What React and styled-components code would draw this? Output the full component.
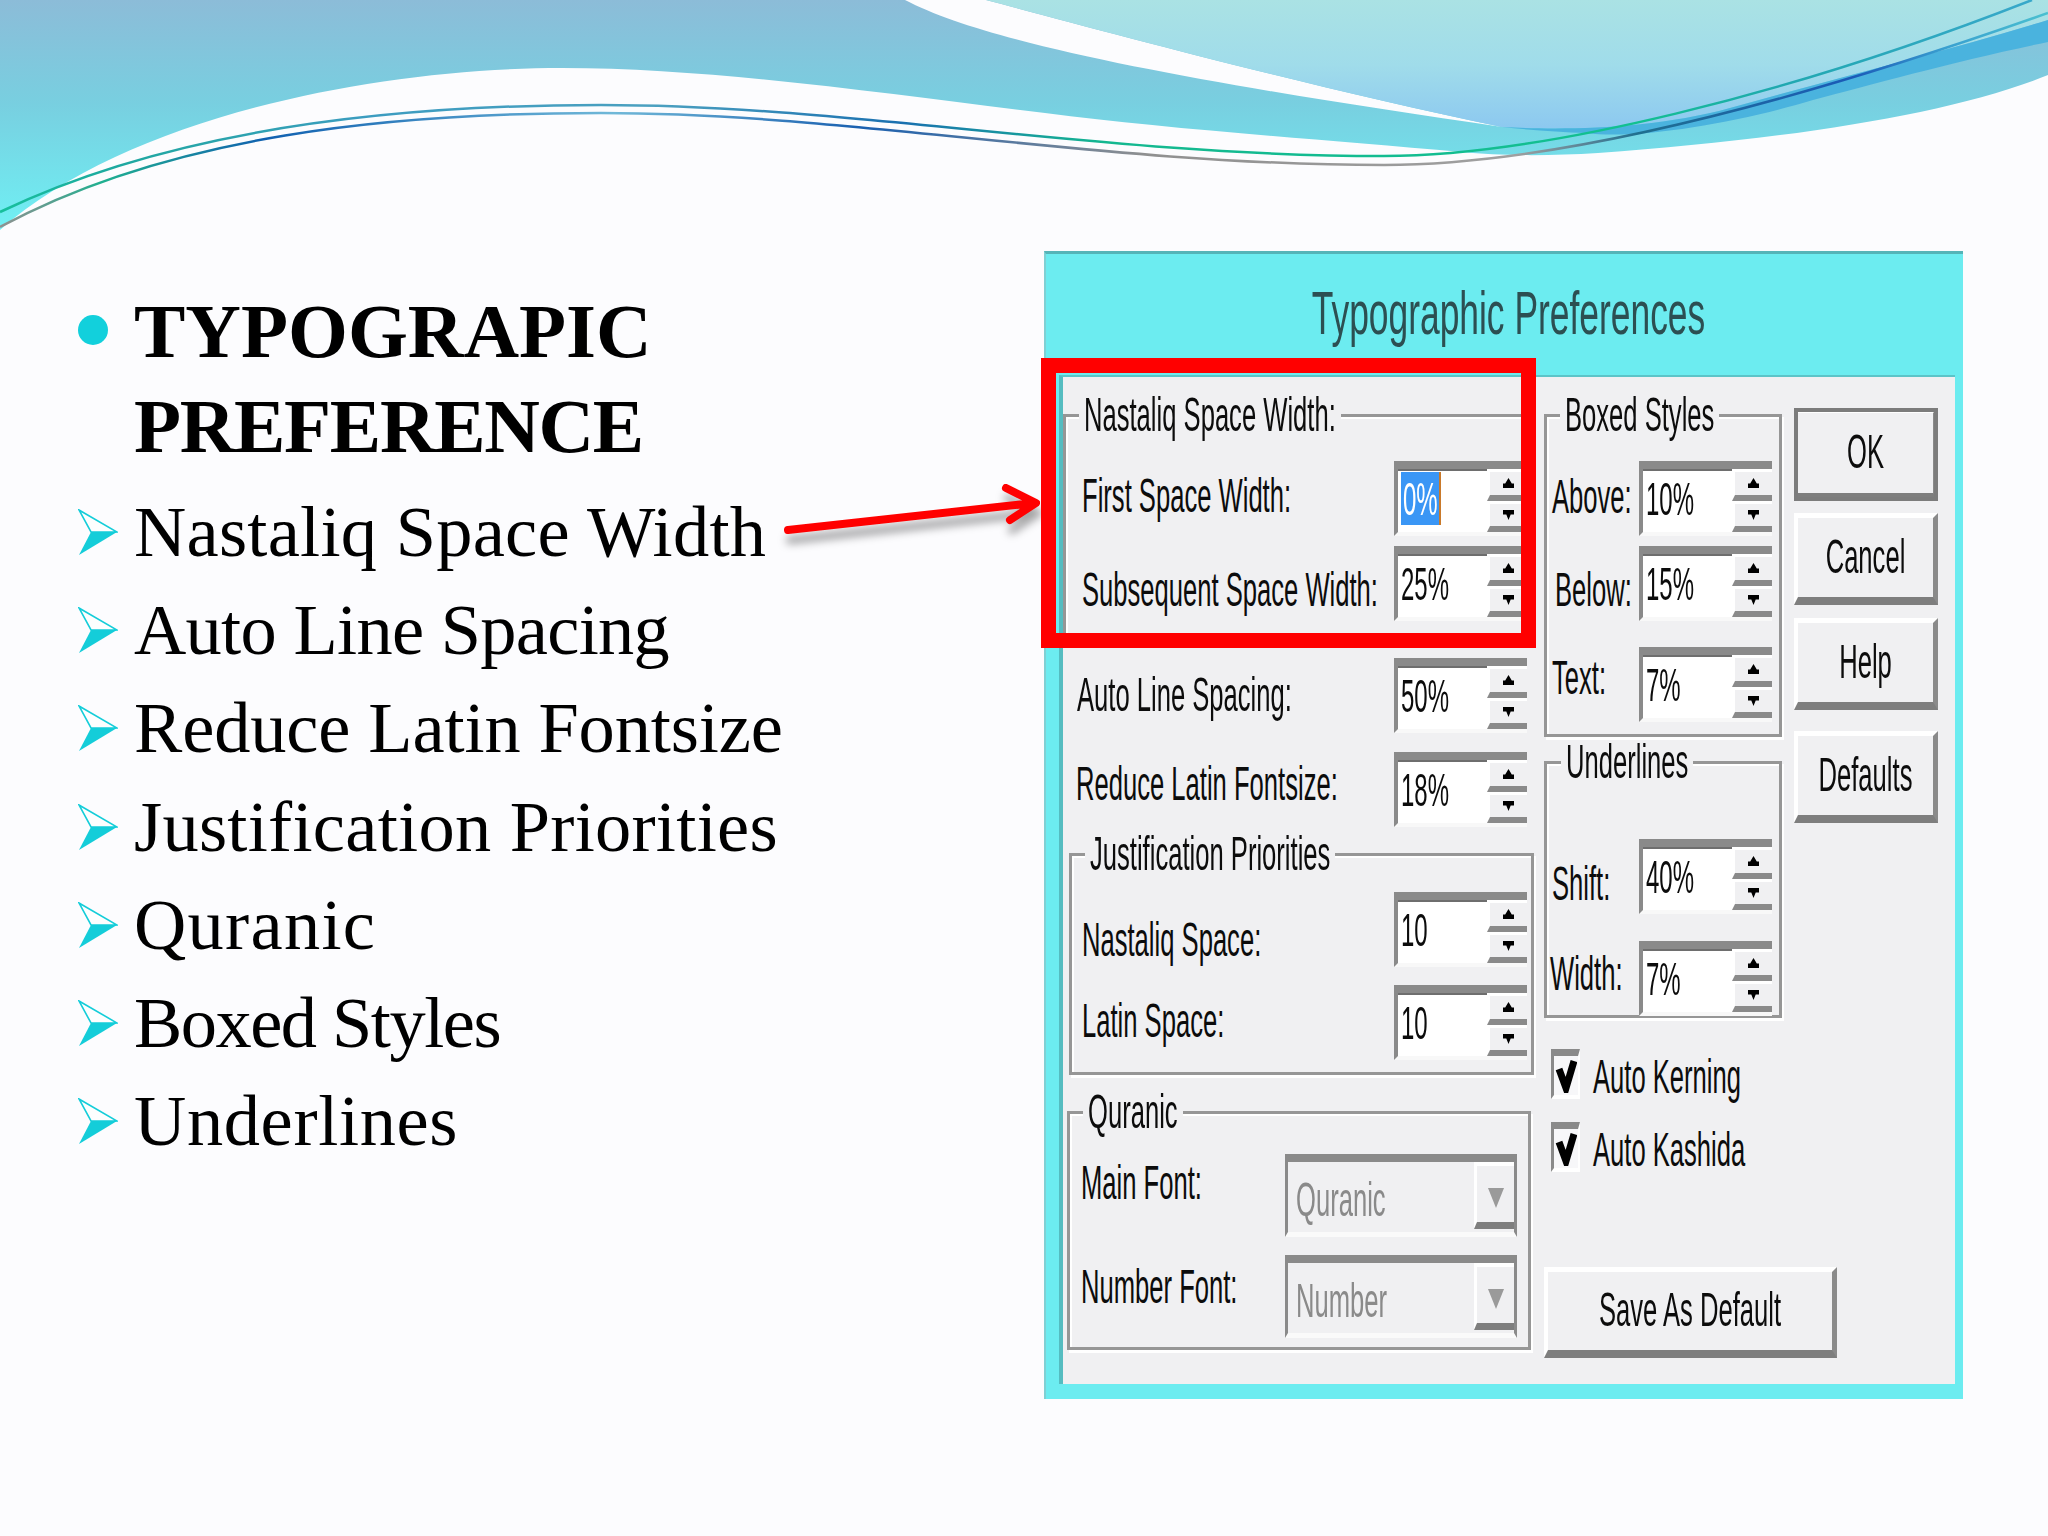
import styled, { createGlobalStyle } from "styled-components";

const GlobalStyle = createGlobalStyle`
  html, body {
    margin: 0;
    padding: 0;
    background: #fcfcfe;
  }
  #root {
    width: 2048px;
    height: 1536px;
    overflow: hidden;
  }
`;

const PANEL = "#f0f0f2";
const LINE = "#8a8a8a";

const Page = styled.div`
  width: 2048px;
  height: 1536px;
  background: #fcfcfe;
`;

const Waves = styled.svg`
  display: block;
  width: 2048px;
  height: 230px;
`;

const Main = styled.div`
  position: relative;
  display: flex;
  padding-left: 78px;
`;

const TextColumn = styled.div`
  width: 966px;
  flex-shrink: 0;
  padding-top: 54px;
  box-sizing: border-box;
  font-family: "Liberation Serif", serif;
  color: #000;
`;

const HeadRow = styled.div`
  display: flex;
  margin-bottom: 9px;
`;

const Dot = styled.span`
  width: 30px;
  height: 30px;
  margin: 31px 26px 0 0;
  border-radius: 50%;
  background: #12d0dc;
  flex-shrink: 0;
`;

const Head = styled.div`
  display: flex;
  flex-direction: column;
  font-size: 77px;
  line-height: 95px;
  font-weight: bold;
`;

const HeadLine = styled.span`
  letter-spacing: ${(p) => p.$spacing || 0}px;
  white-space: nowrap;
`;

const Item = styled.div`
  display: flex;
  height: 98.2px;
  font-size: 72.4px;
  line-height: 98px;
  white-space: nowrap;
  letter-spacing: ${(p) => p.$spacing}px;
`;

const Marker = styled.svg`
  width: 40px;
  height: 46px;
  margin: 26px 16px 0 0;
  flex-shrink: 0;
`;

const Pointer = styled.svg`
  position: absolute;
  left: 780px;
  top: 250px;
  width: 270px;
  height: 60px;
  filter: drop-shadow(2px 10px 4px rgba(0, 0, 0, 0.35));
`;

const Dialog = styled.div`
  position: relative;
  width: 919px;
  height: 1148px;
  margin-top: 21px;
  flex-shrink: 0;
  box-sizing: border-box;
  background: #6cecf0;
  border-top: 3px solid #55b4b8;
  border-left: 2px solid #7fd0d4;
  padding: 0 8px 15px 13px;
  display: flex;
  flex-direction: column;
`;

const TitleBar = styled.div`
  height: 121px;
  flex-shrink: 0;
  box-sizing: border-box;
  display: flex;
  align-items: center;
  justify-content: center;
  padding-left: 3px;
`;

const Title = styled.span`
  display: inline-block;
  font-family: "Liberation Sans", sans-serif;
  font-size: 35.4px;
  line-height: 1;
  color: #2c4f52;
  transform: scaleY(1.72);
`;

const Panel = styled.div`
  flex: 1;
  box-sizing: border-box;
  display: flex;
  background: ${PANEL};
  border-top: 2px solid #5cc4c8;
  border-left: 4px solid #55bcc0;
  padding-top: 37px;
`;

const LeftColumn = styled.div`
  width: 471px;
  margin-right: 10px;
  flex-shrink: 0;
  display: flex;
  flex-direction: column;
`;

const RightSide = styled.div`
  display: flex;
  flex-direction: column;
`;

const RightTop = styled.div`
  display: flex;
`;

const MiddleColumn = styled.div`
  width: 238px;
  margin-right: 12px;
  flex-shrink: 0;
  display: flex;
  flex-direction: column;
`;

const ButtonColumn = styled.div`
  width: 144px;
  margin-top: -6px;
  display: flex;
  flex-direction: column;
`;

const Group = styled.div`
  position: relative;
  box-sizing: border-box;
  height: ${(p) => p.$h}px;
  margin-top: ${(p) => p.$mt || 0}px;
  margin-left: ${(p) => p.$ml || 0}px;
  margin-right: ${(p) => p.$mr || 0}px;
  padding-top: ${(p) => p.$pt}px;
  border: 3px solid #969696;
  box-shadow: inset 2px 2px 0 #fff, 2px 3px 0 #fff;
`;

const Legend = styled.div`
  position: absolute;
  top: -18px;
  left: ${(p) => p.$left}px;
  height: 34px;
  padding: 0 5px;
  background: ${PANEL};
  display: flex;
  align-items: center;
`;

const Row = styled.div`
  display: flex;
  align-items: center;
  justify-content: space-between;
  margin-top: ${(p) => p.$mt || 0}px;
  padding-left: ${(p) => p.$indent || 0}px;
  padding-right: ${(p) => p.$right ?? 7}px;
`;

const Label = styled.span`
  display: inline-block;
  font-family: "Liberation Sans", sans-serif;
  font-size: 25.6px;
  line-height: 1;
  color: #0c0c0c;
  white-space: nowrap;
  transform: translateY(${(p) => p.$dy || 0}px) scaleY(1.9);
`;

const FieldBox = styled.div`
  width: 133px;
  height: 75px;
  flex-shrink: 0;
  box-sizing: border-box;
  display: flex;
  background: #fff;
  border-top: 8px solid ${LINE};
  border-left: 4px solid ${LINE};
  border-bottom: 4px solid #f8f8f8;
  box-shadow: inset 0 2px 0 #6e6e6e;
`;

const FieldValue = styled.div`
  flex: 1;
  display: flex;
  align-items: center;
  padding: 0 0 4px 3px;
`;

const Selected = styled.span`
  height: 53px;
  padding: 0 1px 0 2px;
  display: flex;
  align-items: center;
  background: #3a96f5;
  border-right: 2px solid #c9792a;
`;

const ValueText = styled.span`
  display: inline-block;
  font-family: "Liberation Sans", sans-serif;
  font-size: 24px;
  line-height: 1;
  color: ${(p) => (p.$light ? "#fff" : "#0c0c0c")};
  transform: scaleY(1.95);
`;

const Spinner = styled.div`
  width: 40px;
  flex-shrink: 0;
  display: flex;
  flex-direction: column;
`;

const SpinButton = styled.div`
  flex: 1;
  box-sizing: border-box;
  display: flex;
  align-items: center;
  justify-content: center;
  background: ${PANEL};
  border-top: 3px solid #fff;
  border-left: 3px solid #fff;
  border-bottom: 6px solid ${LINE};
`;

const SpinArrow = styled.svg`
  width: 11px;
  height: 10px;
`;

const CommandButton = styled.div`
  box-sizing: border-box;
  height: ${(p) => p.$h}px;
  width: ${(p) => p.$w || 144}px;
  margin-top: ${(p) => p.$mt || 0}px;
  flex-shrink: 0;
  display: flex;
  align-items: center;
  justify-content: center;
  background: ${PANEL};
  border-style: solid;
  border-width: 5px 5px 8px 4px;
  border-color: #fff ${LINE} #7e7e7e #fff;
  ${(p) => p.$primary && `outline: 4px solid #7c7c7c; outline-offset: -4px;`}
`;

const CheckRow = styled.div`
  display: flex;
  align-items: center;
  gap: 13px;
  margin-top: ${(p) => p.$mt}px;
  padding-left: 7px;
`;

const CheckBox = styled.div`
  width: 29px;
  height: 50px;
  box-sizing: border-box;
  flex-shrink: 0;
  background: #f7f7f9;
  border-top: 7px solid ${LINE};
  border-left: 3px solid ${LINE};
  border-bottom: 4px solid #fff;
  border-right: 2px solid #fff;
  display: flex;
  align-items: center;
  justify-content: center;
`;

const CheckMark = styled.svg`
  width: 22px;
  height: 35px;
`;

const ComboBox = styled.div`
  width: 232px;
  height: 83px;
  flex-shrink: 0;
  box-sizing: border-box;
  display: flex;
  background: ${PANEL};
  border-top: 8px solid ${LINE};
  border-left: 3px solid ${LINE};
  border-bottom: 5px solid #fafafa;
  border-right: 3px solid ${LINE};
`;

const ComboText = styled.div`
  flex: 1;
  display: flex;
  align-items: center;
  padding: 8px 0 0 8px;
`;

const ComboLabel = styled(Label)`
  color: #8a8a8a;
`;

const ComboArrow = styled.div`
  width: 40px;
  box-sizing: border-box;
  display: flex;
  align-items: center;
  justify-content: center;
  padding-top: 8px;
  background: ${PANEL};
  border-top: 4px solid #fff;
  border-left: 3px solid #fff;
  border-bottom: 7px solid #7e7e7e;
  margin-bottom: 3px;
`;

const ComboTriangle = styled.svg`
  width: 16px;
  height: 20px;
`;

const RedFrame = styled.div`
  position: absolute;
  left: -5px;
  top: 104px;
  width: 495px;
  height: 290px;
  box-sizing: border-box;
  border: 15px solid #ff0000;
`;

const items = [
  { text: "Nastaliq Space Width", spacing: 0.26 },
  { text: "Auto Line Spacing", spacing: -0.69 },
  { text: "Reduce Latin Fontsize", spacing: -0.12 },
  { text: "Justification Priorities", spacing: 0.27 },
  { text: "Quranic", spacing: 1.3 },
  { text: "Boxed Styles", spacing: -1.5 },
  { text: "Underlines", spacing: 0.65 },
];

function Arrowhead() {
  return (
    <Marker viewBox="0 0 40 46">
      <polygon
        points="1,1 39,23 13,23"
        fill="#fdfefe"
        stroke="#14cdd9"
        strokeWidth="1.6"
      />
      <polygon points="13,23 39,23 1,46" fill="#14cdd9" />
    </Marker>
  );
}

function SpinField({ value, selected }) {
  return (
    <FieldBox>
      <FieldValue>
        {selected ? (
          <Selected>
            <ValueText $light>{value}</ValueText>
          </Selected>
        ) : (
          <ValueText>{value}</ValueText>
        )}
      </FieldValue>
      <Spinner>
        <SpinButton>
          <SpinArrow viewBox="0 0 10 9">
            <path d="M5 0 L8 5 H10 V9 H0 V5 H2 Z" fill="#000" />
          </SpinArrow>
        </SpinButton>
        <SpinButton>
          <SpinArrow viewBox="0 0 10 9">
            <path d="M0 0 H10 V4 H7 L5 9 L3 4 H0 Z" fill="#000" />
          </SpinArrow>
        </SpinButton>
      </Spinner>
    </FieldBox>
  );
}

function Combo({ value }) {
  return (
    <ComboBox>
      <ComboText>
        <ComboLabel>{value}</ComboLabel>
      </ComboText>
      <ComboArrow>
        <ComboTriangle viewBox="0 0 16 20">
          <path d="M0 0 H16 L8 20 Z" fill="#9a9a9a" />
        </ComboTriangle>
      </ComboArrow>
    </ComboBox>
  );
}

function Check({ label, mt }) {
  return (
    <CheckRow $mt={mt}>
      <CheckBox>
        <CheckMark viewBox="0 0 22 35">
          <path d="M4 11 L11 30 L19 3" fill="none" stroke="#000" strokeWidth="7" />
        </CheckMark>
      </CheckBox>
      <Label $dy={4}>{label}</Label>
    </CheckRow>
  );
}

export default function App() {
  return (
    <Page>
      <GlobalStyle />
      <Waves viewBox="0 0 2048 230">
        <defs>
          <linearGradient id="teal" gradientUnits="userSpaceOnUse" x1="0" y1="0" x2="0" y2="230">
            <stop offset="0" stopColor="#8cbcd8" />
            <stop offset="0.45" stopColor="#78cfe0" />
            <stop offset="1" stopColor="#6ff0f4" />
          </linearGradient>
          <linearGradient id="light" gradientUnits="userSpaceOnUse" x1="0" y1="0" x2="0" y2="130">
            <stop offset="0" stopColor="#aae2e4" />
            <stop offset="0.5" stopColor="#a0dcea" />
            <stop offset="1" stopColor="#8cc8f0" />
          </linearGradient>
          <linearGradient id="upper" gradientUnits="userSpaceOnUse" x1="0" y1="0" x2="2048" y2="0">
            <stop offset="0" stopColor="#16bf9c" />
            <stop offset="0.06" stopColor="#1fa8a0" />
            <stop offset="0.18" stopColor="#3c9cc0" />
            <stop offset="0.32" stopColor="#4ba0c0" />
            <stop offset="0.44" stopColor="#1a70b0" />
            <stop offset="0.54" stopColor="#14b890" />
            <stop offset="0.8" stopColor="#12c090" />
            <stop offset="0.87" stopColor="#20a8b0" />
            <stop offset="1" stopColor="#3aa8cc" />
          </linearGradient>
          <linearGradient id="lower" gradientUnits="userSpaceOnUse" x1="0" y1="0" x2="2048" y2="0">
            <stop offset="0" stopColor="#909090" />
            <stop offset="0.05" stopColor="#20b090" />
            <stop offset="0.13" stopColor="#1060b0" />
            <stop offset="0.3" stopColor="#70b8d8" />
            <stop offset="0.42" stopColor="#1a60b0" />
            <stop offset="0.56" stopColor="#909090" />
            <stop offset="0.74" stopColor="#a0a0a0" />
            <stop offset="0.8" stopColor="#1f6f8f" />
            <stop offset="0.905" stopColor="#1a5ab8" />
            <stop offset="0.95" stopColor="#3aa0d0" />
            <stop offset="1" stopColor="#4ac0d0" />
          </linearGradient>
        </defs>
        <path
          d="M0 230 V0 H2048 V75 C1950 115 1780 140 1598 153 C1550 156 1500 156 1462 152 C1300 138 1160 128 1045 113 C900 96 720 68 562 68 C380 68 130 115 0 230 Z"
          fill="url(#teal)"
        />
        <path d="M905 0 H986 C1100 30 1300 85 1502 127 C1250 90 1000 50 905 0 Z" fill="#fcfcfe" />
        <path
          d="M986 0 H2048 V20 C1950 50 1830 80 1730 108 C1650 130 1560 130 1502 127 C1300 85 1100 30 986 0 Z"
          fill="url(#light)"
        />
        <path
          d="M1502 127 C1560 130 1650 130 1730 108 C1830 80 1950 50 2048 20 V42 C1960 60 1870 85 1813 100 C1740 122 1640 140 1586 133 C1560 132 1530 130 1502 127 Z"
          fill="#4ab3de"
        />
        <path
          d="M0 227 C170 135 390 113 601 113 C850 113 1100 165 1384 165 C1540 165 1760 115 2048 13"
          fill="none"
          stroke="url(#lower)"
          strokeWidth="2.5"
        />
        <path
          d="M0 212 C170 130 390 105 601 105 C850 105 1100 156 1384 156 C1540 156 1790 95 2032 0"
          fill="none"
          stroke="url(#upper)"
          strokeWidth="2.5"
        />
      </Waves>
      <Main>
        <TextColumn>
          <HeadRow>
            <Dot />
            <Head>
              <HeadLine>TYPOGRAPIC</HeadLine>
              <HeadLine $spacing={-1.3}>PREFERENCE</HeadLine>
            </Head>
          </HeadRow>
          {items.map((item) => (
            <Item key={item.text} $spacing={item.spacing}>
              <Arrowhead />
              {item.text}
            </Item>
          ))}
        </TextColumn>
        <Pointer viewBox="0 0 270 60">
          <path
            d="M8 50 L254 23 M226 8 L256 23 L230 40"
            fill="none"
            stroke="#ff0000"
            strokeWidth="8"
            strokeLinejoin="round"
            strokeLinecap="round"
          />
        </Pointer>
        <Dialog>
          <TitleBar>
            <Title>Typographic Preferences</Title>
          </TitleBar>
          <Panel>
            <LeftColumn>
              <Group $h={226} $pt={44}>
                <Legend $left={13}>
                  <Label>Nastaliq Space Width:</Label>
                </Legend>
                <Row $indent={16} $right={4}>
                  <Label $dy={-2}>First Space Width:</Label>
                  <SpinField value="0%" selected />
                </Row>
                <Row $mt={10} $indent={16} $right={4}>
                  <Label $dy={7}>Subsequent Space Width:</Label>
                  <SpinField value="25%" />
                </Row>
              </Group>
              <Row $mt={18} $indent={14}>
                <Label>Auto Line Spacing:</Label>
                <SpinField value="50%" />
              </Row>
              <Row $mt={19} $indent={13}>
                <Label $dy={-5}>Reduce Latin Fontsize:</Label>
                <SpinField value="18%" />
              </Row>
              <Group $h={222} $mt={26} $ml={6} $pt={36}>
                <Legend $left={13}>
                  <Label>Justification Priorities</Label>
                </Legend>
                <Row $indent={10} $right={4}>
                  <Label $dy={11}>Nastaliq Space:</Label>
                  <SpinField value="10" />
                </Row>
                <Row $mt={18} $indent={10} $right={4}>
                  <Label $dy={-1}>Latin Space:</Label>
                  <SpinField value="10" />
                </Row>
              </Group>
              <Group $h={239} $mt={36} $ml={4} $mr={3} $pt={40}>
                <Legend $left={13}>
                  <Label>Quranic</Label>
                </Legend>
                <Row $indent={11} $right={11}>
                  <Label $dy={-12}>Main Font:</Label>
                  <Combo value="Quranic" />
                </Row>
                <Row $mt={18} $indent={11} $right={11}>
                  <Label $dy={-9}>Number Font:</Label>
                  <Combo value="Number" />
                </Row>
              </Group>
            </LeftColumn>
            <RightSide>
              <RightTop>
                <MiddleColumn>
                  <Group $h={323} $pt={44}>
                    <Legend $left={13}>
                      <Label>Boxed Styles</Label>
                    </Legend>
                    <Row $indent={5} $right={7}>
                      <Label $dy={-1}>Above:</Label>
                      <SpinField value="10%" />
                    </Row>
                    <Row $mt={10} $indent={8} $right={7}>
                      <Label $dy={7}>Below:</Label>
                      <SpinField value="15%" />
                    </Row>
                    <Row $mt={26} $indent={5} $right={7}>
                      <Label $dy={-6}>Text:</Label>
                      <SpinField value="7%" />
                    </Row>
                  </Group>
                  <Group $h={257} $mt={24} $pt={75}>
                    <Legend $left={14}>
                      <Label>Underlines</Label>
                    </Legend>
                    <Row $indent={5} $right={7}>
                      <Label $dy={8}>Shift:</Label>
                      <SpinField value="40%" />
                    </Row>
                    <Row $mt={27} $indent={3} $right={7}>
                      <Label $dy={-4}>Width:</Label>
                      <SpinField value="7%" />
                    </Row>
                  </Group>
                  <Check label="Auto Kerning" mt={31} />
                  <Check label="Auto Kashida" mt={23} />
                </MiddleColumn>
                <ButtonColumn>
                  <CommandButton $h={93} $primary>
                    <Label>OK</Label>
                  </CommandButton>
                  <CommandButton $h={92} $mt={12}>
                    <Label>Cancel</Label>
                  </CommandButton>
                  <CommandButton $h={92} $mt={13}>
                    <Label>Help</Label>
                  </CommandButton>
                  <CommandButton $h={92} $mt={21}>
                    <Label>Defaults</Label>
                  </CommandButton>
                </ButtonColumn>
              </RightTop>
              <CommandButton $h={91} $w={293} $mt={95}>
                <Label>Save As Default</Label>
              </CommandButton>
            </RightSide>
          </Panel>
          <RedFrame />
        </Dialog>
      </Main>
    </Page>
  );
}
